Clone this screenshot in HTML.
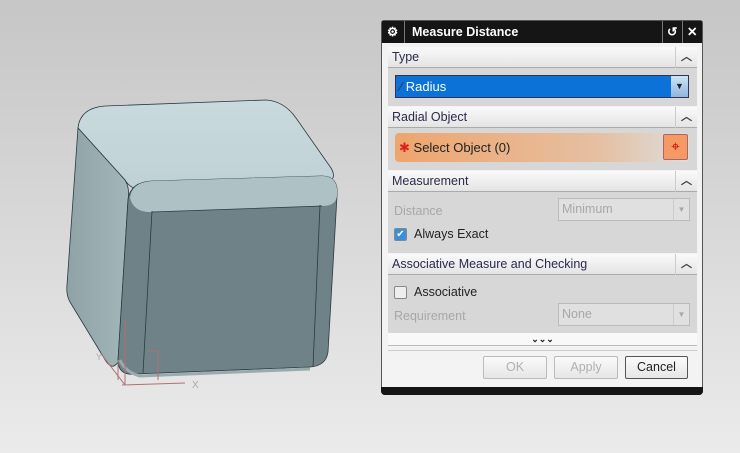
<!DOCTYPE html>
<html><head><style>
*{margin:0;padding:0;box-sizing:border-box}
body{width:740px;height:453px;overflow:hidden;background:linear-gradient(#c6c6c6,#dcdcdc 60%,#ebebeb);font-family:"Liberation Sans",sans-serif;font-size:12.5px;position:relative}
.a{position:absolute}
.dlg{left:381px;top:20px;width:322px;height:375px;background:#f3f3f3;border:1px solid #555;border-radius:3px 3px 4px 4px}
.title{left:0;top:0;width:320px;height:22px;background:#151515;color:#fff;font-weight:bold;font-size:12.5px}
.hdr{left:6px;width:309px;height:21px;background:linear-gradient(#fafafa,#e4e4e4);border-bottom:1px solid #aaa;color:#2a2a4a;line-height:21px;padding-left:4px}
.hdr .c{position:absolute;right:0;top:0;width:22px;height:21px;border-left:1px solid #ccc;text-align:center;font-size:11px;color:#444;font-weight:bold}
.body{left:6px;width:309px;background:#d7d7d7}
.gray{color:#a8a8a8}
.dd{background:#e0e0e0;border:1px solid #bbb;color:#a8a8a8;padding-left:3px;line-height:21px}
.btn{height:23px;border:1px solid #bbb;border-radius:2px;background:linear-gradient(#fafafa,#e6e6e6);text-align:center;line-height:21px;color:#b0b0b0;font-size:12.5px}
.cb{width:13px;height:13px;border:1px solid #888;border-radius:2px;background:#eee}
</style></head><body>
<svg class="a" style="left:0;top:0" width="380" height="453">
<defs>
<linearGradient id="lf" x1="0" y1="0" x2="1" y2="0"><stop offset="0" stop-color="#8fa2a6"/><stop offset="1" stop-color="#a3b6ba"/></linearGradient>
<linearGradient id="tp" x1="0" y1="0" x2="0" y2="1"><stop offset="0" stop-color="#c9dade"/><stop offset="1" stop-color="#bfd1d5"/></linearGradient>
</defs>
<path d="M78,128 Q80,108 105,106 L266,100 Q284,101 296,118 L331,168 Q338,180 325,183 L150,190 Q132,192 125,180 Z" fill="url(#tp)" stroke="#2a3a40" stroke-width=".8"/>
<path d="M78,128 L125,180 Q130,188 128,200 L118,362 Q112,372 104,358 L70,302 Q66,295 67,285 Z" fill="url(#lf)" stroke="#2a3a40" stroke-width=".8"/>
<path d="M128,200 Q130,182 152,181 L322,176 Q339,176 337,196 L328,352 Q326,366 310,367 L135,374 Q118,376 118,360 Z" fill="#6f8287" stroke="#2a3a40" stroke-width=".8"/>
<path d="M130,198 Q132,182 152,181 L322,176 Q339,176 337,196 Q336,206 322,206 L152,212 Q134,213 130,198Z" fill="#aec1c5"/>
<path d="M152,211 L143,373 M320,205 L313,367 M152,212 L322,206" stroke="#2a3a40" fill="none" stroke-width=".8"/>
<path d="M120,360 Q125,372 140,376 L310,369" stroke="#9aabaf" fill="none" stroke-width="3"/>
<g stroke="#b07070" fill="none" stroke-width="1"><path d="M125,385 L125,320 M122,385 L185,383 M125,385 L102,355 M148,351 L158,351 L158,380 M118,380 L118,360"/></g>
<text x="192" y="388" fill="#aaa" font-size="10" font-family="Liberation Sans">X</text>
<text x="96" y="360" fill="#aaa" font-size="9" font-family="Liberation Sans">Y</text>
</svg>
<div class="a dlg">
 <div class="a title"><span class="a" style="left:5px;top:3px">⚙</span><span class="a" style="left:22px;top:0;width:1px;height:22px;background:#777"></span><span class="a" style="left:30px;top:4px">Measure Distance</span><span class="a" style="left:280px;top:0;width:1px;height:22px;background:#777"></span><span class="a" style="left:285px;top:3px">↺</span><span class="a" style="left:300px;top:0;width:1px;height:22px;background:#777"></span><span class="a" style="left:305px;top:3px">✕</span></div>
 <div class="a hdr" style="top:26px">Type<span class="c">︿</span></div>
 <div class="a body" style="top:47px;height:38px"><div class="a" style="left:7px;top:7px;width:294px;height:23px;background:#0c72d8;border:1px solid #335;color:#fff;line-height:21px;padding-left:4px;font-size:13px"><span style="color:#335">⁄</span> Radius<span class="a" style="right:0;top:0;width:17px;height:21px;background:linear-gradient(#cfe3f5,#8fb6dc);color:#223;text-align:center;font-size:9px">▼</span></div></div>
 <div class="a hdr" style="top:86px">Radial Object<span class="c">︿</span></div>
 <div class="a body" style="top:107px;height:42px"><div class="a" style="left:7px;top:5px;width:294px;height:29px;background:linear-gradient(90deg,#eea56d,#e5c0a2 70%,#ddd);border-radius:4px;line-height:29px;padding-left:4px;color:#222;font-size:13px"><span style="color:#e02020">✱</span> Select Object (0)<span class="a" style="right:1px;top:1px;width:25px;height:26px;background:#f59a62;border:1px solid #a66;border-radius:2px;color:#c00;text-align:center;line-height:24px;font-size:15px">⌖</span></div></div>
 <div class="a hdr" style="top:150px">Measurement<span class="c">︿</span></div>
 <div class="a body" style="top:171px;height:61px"><span class="a gray" style="left:6px;top:12px">Distance</span><div class="a dd" style="left:170px;top:6px;width:132px;height:23px">Minimum<span class="a" style="right:0;top:0;width:16px;height:21px;border-left:1px solid #ccc;text-align:center;font-size:8px">▼</span></div><span class="a cb" style="left:6px;top:36px;background:#3a8fd8;color:#fff;font-size:10px;line-height:11px;text-align:center">✔</span><span class="a" style="left:26px;top:35px;color:#222">Always Exact</span></div>
 <div class="a hdr" style="top:233px">Associative Measure and Checking<span class="c">︿</span></div>
 <div class="a body" style="top:254px;height:58px"><span class="a cb" style="left:6px;top:11px"></span><span class="a" style="left:26px;top:10px;color:#222">Associative</span><span class="a gray" style="left:6px;top:34px">Requirement</span><div class="a dd" style="left:170px;top:28px;width:132px;height:23px">None<span class="a" style="right:0;top:0;width:16px;height:21px;border-left:1px solid #ccc;text-align:center;font-size:8px">▼</span></div></div>
 <div class="a" style="left:6px;top:312px;width:309px;height:13px;background:#f8f8f8;border-bottom:1px solid #bbb;text-align:center;font-size:9px;line-height:12px;font-weight:bold;color:#222">⌄⌄⌄</div>
 <div class="a" style="left:6px;top:329px;width:309px;height:1px;background:#ccc"></div>
 <div class="a btn" style="left:101px;top:335px;width:64px">OK</div>
 <div class="a btn" style="left:172px;top:335px;width:64px">Apply</div>
 <div class="a btn" style="left:243px;top:335px;width:63px;border-color:#555;color:#222">Cancel</div>
 <div class="a" style="left:-1px;top:366px;width:322px;height:8px;background:#151515;border-radius:0 0 4px 4px"></div>
</div>
</body></html>
